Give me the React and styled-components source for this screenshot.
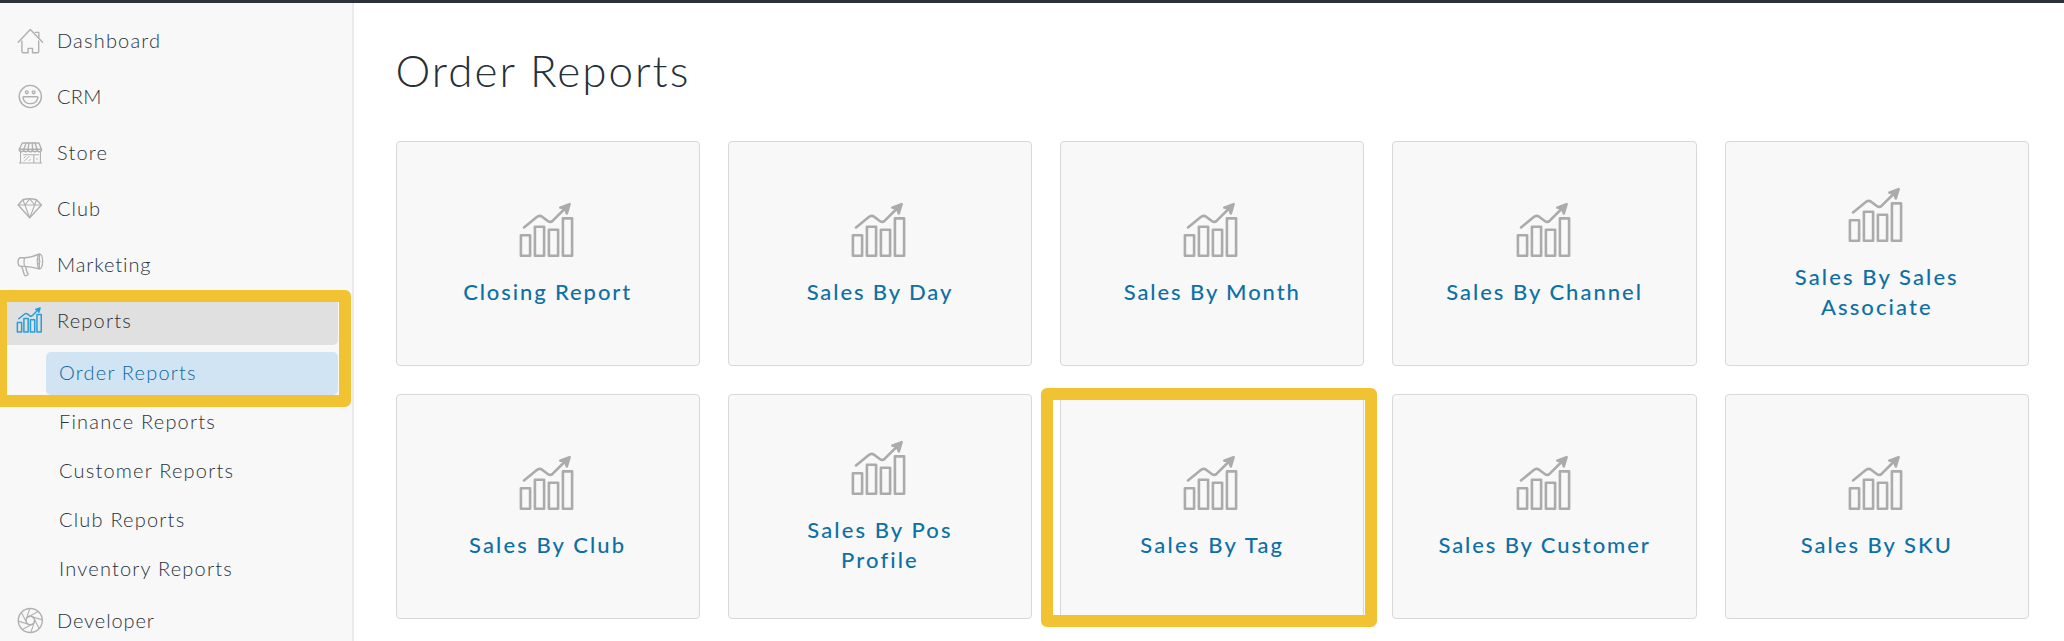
import React from "react";
import styled, { createGlobalStyle, css } from "styled-components";

const GlobalStyle = createGlobalStyle`
  *,
  *::after {
    box-sizing: border-box;
  }

  body {
    margin: 0;
    background: #ffffff;
    font-family: Lato, "Open Sans", sans-serif;
    overflow: hidden;
  }
`;

const Page = styled.div`
  height: 641px;
  display: flex;
  flex-direction: column;
  overflow: hidden;
`;

const TopBar = styled.div`
  flex: none;
  height: 3px;
  background: #2b323c;
`;

const Body = styled.div`
  flex: 1;
  min-height: 0;
  display: flex;
`;

const Sidebar = styled.nav`
  flex: none;
  width: 354px;
  padding: 14px 14px 0 0;
  background: #f8f8f8;
  border-right: 2px solid #ebebeb;
`;

const NavItem = styled.a`
  height: 48px;
  margin-bottom: 8px;
  padding: 0 0 2px 16px;
  display: flex;
  align-items: center;
  gap: 13px;
  border-radius: 0 5px 5px 0;
  background: ${(props) => (props.$active ? "#e0e0e0" : "transparent")};
  color: #28323c;
  font-size: 20px;
  font-weight: 300;
  letter-spacing: ${(props) => props.$spacing || 0.9}px;

  svg {
    flex: none;
    color: ${(props) => (props.$active ? "#2a9dd6" : "#b0b0b0")};
  }
`;

const SubNav = styled.div`
  margin: -1px 0 2px 46px;
`;

const SubItem = styled.a`
  height: 43px;
  margin-bottom: 6px;
  padding: 0 0 3px 13px;
  display: flex;
  align-items: center;
  border-radius: 5px;
  background: ${(props) => (props.$active ? "#d1e4f3" : "transparent")};
  color: ${(props) => (props.$active ? "#0f689c" : "#28323c")};
  font-size: 20px;
  font-weight: 300;
  letter-spacing: ${(props) => props.$spacing || 1.2}px;
`;

const highlightFrame = css`
  content: "";
  position: absolute;
  border: 12px solid #f1c232;
  border-radius: 6px;
  pointer-events: none;
  z-index: 1;
`;

const HighlightedGroup = styled.div`
  position: relative;

  &::after {
    ${highlightFrame}
    top: -7px;
    left: -5px;
    width: 356px;
    height: 117px;
  }
`;

const Main = styled.main`
  flex: 1;
  padding: 37px 35px 0 41.5px;
`;

const Title = styled.h1`
  margin: 0 0 41px;
  height: 60px;
  line-height: 60px;
  color: #263039;
  font-size: 44px;
  font-weight: 300;
  letter-spacing: 2px;
`;

const CardGrid = styled.div`
  display: grid;
  grid-template-columns: repeat(5, 1fr);
  grid-auto-rows: 225px;
  gap: 28px;
`;

const Card = styled.a`
  position: relative;
  padding: 0 30px;
  display: flex;
  flex-direction: column;
  align-items: center;
  justify-content: center;
  gap: 18px;
  background: #f8f8f8;
  border: 1px solid #d6d8d9;
  border-radius: 4px;
  color: #ababab;

  &::after {
    ${(props) => props.$highlighted && highlightFrame}
    inset: -7px -14px -9px -20px;
  }
`;

const CardLabel = styled.span`
  max-width: ${(props) => props.$width || 240}px;
  margin-top: -1px;
  color: #0d70a5;
  font-size: 22px;
  font-weight: 500;
  line-height: 30px;
  letter-spacing: ${(props) => props.$spacing || 1.9}px;
  text-align: center;
`;

function NavIcon({ children }) {
  return (
    <svg
      width="28"
      height="28"
      viewBox="0 0 28 28"
      fill="none"
      stroke="currentColor"
      strokeWidth="1.4"
      strokeLinecap="round"
      strokeLinejoin="round"
    >
      {children}
    </svg>
  );
}

function HouseIcon() {
  return (
    <NavIcon>
      <path d="M2.2 16.3 14.3 3.6l12.3 12.7" />
      <path d="M19.3 6.4h3.5v5.4" />
      <path d="M5.9 15v10.6q0 1.2 1.2 1.2h5v-4.4h4.4v4.4h5q1.2 0 1.2-1.2V15" />
    </NavIcon>
  );
}

function SmileIcon() {
  return (
    <NavIcon>
      <circle cx="14.3" cy="14.5" r="11.1" />
      <circle cx="10.8" cy="10.3" r="1.4" />
      <circle cx="17.6" cy="10.3" r="1.4" />
      <path d="M7.6 14.8h13.6q.9 0 .6 1c-.8 3.600-4 5.800-7.400 5.800s-6.600-2.200-7.400-5.800q-.3-1 .6-1Z" />
    </NavIcon>
  );
}

function StoreIcon() {
  return (
    <NavIcon>
      <path d="M6.3 5h16.6l2.6 6.200H3.300Z" />
      <path d="M3.300 11.200c0 3.300 4.400 3.300 4.400 0 0 3.300 4.400 3.300 4.400 0 0 3.300 4.500 3.300 4.500 0 0 3.300 4.400 3.300 4.400 0 0 3.300 4.500 3.300 4.500 0" />
      <path d="M10.300 5 7.700 11.200M13 5l-.9 6.200M16.200 5l.4 6.200M19 5l2 6.200" />
      <path d="M4.500 14v10.500M24.400 14v10.500M3.400 25h22.200M17.800 24.500v-7.800M22.600 16.700H7.500" strokeWidth="1.100" />
      <path d="m8 20 1.300-1.300M8.500 23l4.500-4.500M13 22.700l1.300-1.300" strokeWidth="1" />
      <path d="M20.800 20.500v.8" strokeWidth="1.100" />
    </NavIcon>
  );
}

function DiamondIcon() {
  return (
    <NavIcon>
      <path d="m2.200 11 4.600-5.300q6.700-1.800 13.700 0l4.900 5.300-11.700 12.800Z" />
      <path d="M2.200 11h23.200M6.800 5.700 8.900 11l4.800-6.200 5 6.200 1.800-5.300M8.900 11l4.800 12.800 5-12.800" strokeWidth="1.100" />
    </NavIcon>
  );
}

function MegaphoneIcon() {
  return (
    <NavIcon>
      <path d="M8.500 7.800H5q-3 0-3 4.200t3 4.400h3.500c6 .3 9.800 1.200 14.800 2.500V4.100C18.300 6 14.500 7.500 8.500 7.800Z" />
      <path d="M8.500 7.800q-1 4.200 0 8.600M23.300 4.100c4.400-1 4.400 15.700 0 14.800-2.700-1.800-2.700-13 0-14.800ZM22 9c2.600.3 2.600 4.600 0 5" strokeWidth="1.200" />
      <path d="m5.800 16.500 2.500 8.200q.5 1.300 1.900.9l1.300-.4q.9-.4.500-1.500l-.9-1.200-1.500-6" />
    </NavIcon>
  );
}

function ApertureIcon() {
  const blades = [0, 45, 90, 135, 180, 225, 270, 315];
  return (
    <NavIcon>
      <circle cx="14.3" cy="14.5" r="12" />
      <circle cx="14.3" cy="14.5" r="4.3" />
      {blades.map((angle) => (
        <path
          key={angle}
          d="M11.500 11.200 22.300 5.600"
          strokeWidth="1.100"
          transform={`rotate(${angle} 14.300 14.500)`}
        />
      ))}
    </NavIcon>
  );
}

function ChartIcon({ size = 60, strokeWidth = 2.6 }) {
  return (
    <svg
      width={size}
      height={size}
      viewBox="0 0 60 60"
      fill="none"
      stroke="currentColor"
      strokeWidth={strokeWidth}
      strokeLinecap="round"
      strokeLinejoin="round"
    >
      <rect x="2.9" y="35.3" width="9.2" height="20.4" />
      <rect x="16.9" y="26.7" width="9.2" height="29" />
      <rect x="30.9" y="29.7" width="9.2" height="26" />
      <rect x="44.9" y="18.4" width="9.2" height="37.3" />
      <path d="M6 27.4 18.5 17.2q2.700-2.300 5.600-.5l5.700 4.300q2.600 1.900 5-.3L49.500 6" />
      <path d="m42.300 7.600 9.300-3.400-2.800 9.200-1.700-4.600Z" fill="currentColor" />
    </svg>
  );
}

const topLinks = [
  { label: "Dashboard", icon: <HouseIcon />, spacing: 1.2 },
  { label: "CRM", icon: <SmileIcon />, spacing: 0.3 },
  { label: "Store", icon: <StoreIcon />, spacing: 1.2 },
  { label: "Club", icon: <DiamondIcon />, spacing: 1 },
  { label: "Marketing", icon: <MegaphoneIcon />, spacing: 0.9 },
];

const reportLinks = [
  { label: "Order Reports", active: true },
  { label: "Finance Reports" },
  { label: "Customer Reports" },
  { label: "Club Reports" },
  { label: "Inventory Reports" },
];

const cards = [
  { label: "Closing Report" },
  { label: "Sales By Day" },
  { label: "Sales By Month" },
  { label: "Sales By Channel", spacing: 2 },
  { label: "Sales By Sales Associate", width: 200, spacing: 2.1 },
  { label: "Sales By Club", spacing: 2.1 },
  { label: "Sales By Pos Profile", width: 170, spacing: 2.1 },
  { label: "Sales By Tag", highlighted: true, spacing: 2.2 },
  { label: "Sales By Customer" },
  { label: "Sales By SKU", spacing: 2 },
];

export default function App() {
  return (
    <>
      <GlobalStyle />
      <Page>
        <TopBar />
        <Body>
          <Sidebar>
            {topLinks.map((link) => (
              <NavItem key={link.label} $spacing={link.spacing}>
                {link.icon}
                <span>{link.label}</span>
              </NavItem>
            ))}
            <HighlightedGroup>
              <NavItem $active $spacing={1.2}>
                <ChartIcon size={28} strokeWidth={3.2} />
                <span>Reports</span>
              </NavItem>
              <SubNav>
                {reportLinks.map((link) => (
                  <SubItem key={link.label} $active={link.active}>
                    {link.label}
                  </SubItem>
                ))}
              </SubNav>
            </HighlightedGroup>
            <NavItem>
              <ApertureIcon />
              <span>Developer</span>
            </NavItem>
          </Sidebar>
          <Main>
            <Title>Order Reports</Title>
            <CardGrid>
              {cards.map((card) => (
                <Card key={card.label} $highlighted={card.highlighted}>
                  <ChartIcon />
                  <CardLabel $width={card.width} $spacing={card.spacing}>
                    {card.label}
                  </CardLabel>
                </Card>
              ))}
            </CardGrid>
          </Main>
        </Body>
      </Page>
    </>
  );
}
